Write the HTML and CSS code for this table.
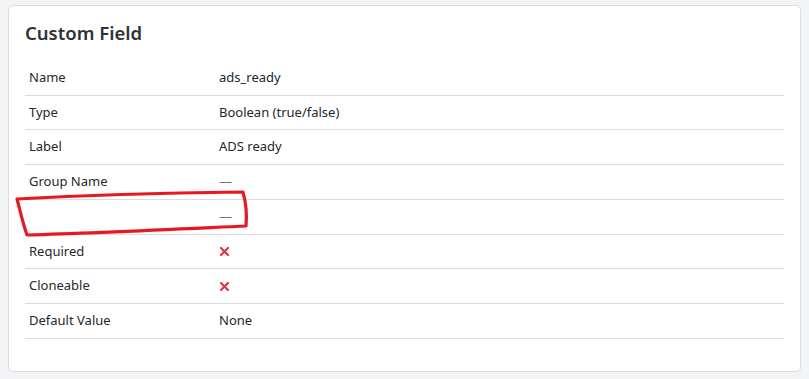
FILE: index.html
```html
<!DOCTYPE html>
<html lang="en">
<head>
  <meta charset="UTF-8">
  <meta name="viewport" content="width=device-width, initial-scale=1.0">
  <title>Custom Field</title>
  <link rel="stylesheet" href="styles.css">
</head>
<body>
  <div class="card">
    <h2 class="card-title">Custom Field</h2>
    <table class="details">
      <tr><td>Name</td><td>ads_ready</td></tr>
      <tr><td>Type</td><td>Boolean (true/false)</td></tr>
      <tr><td>Label</td><td>ADS ready</td></tr>
      <tr><td>Group Name</td><td><span class="muted">&mdash;</span></td></tr>
      <tr><td></td><td><span class="muted">&mdash;</span></td></tr>
      <tr>
        <td>Required</td>
        <td><svg class="no" width="9" height="9" viewBox="0 0 9 9"><path d="M1,1 L8,8 M8,1 L1,8"/></svg></td>
      </tr>
      <tr>
        <td>Cloneable</td>
        <td><svg class="no" width="9" height="9" viewBox="0 0 9 9"><path d="M1,1 L8,8 M8,1 L1,8"/></svg></td>
      </tr>
      <tr><td>Default Value</td><td>None</td></tr>
    </table>
  </div>

  <!-- marker scribble over the unnamed row -->
  <svg class="scribble" width="809" height="379" viewBox="0 0 809 379">
    <path d="M17,199 C70,196 160,193 243,192 C246,203 247,215 246,226 C180,229 100,233 27,235 C23,224 20,210 17,199"
          fill="none" stroke="#e5191f" stroke-width="3.2" stroke-linecap="round" stroke-linejoin="round"/>
  </svg>
</body>
</html>
```

FILE: styles.css
```css
body {
  margin: 0;
  padding: 5px 10px 0 8px;
  font-family: "Noto Sans", "Segoe UI", Arial, sans-serif;
  font-size: 13px;
  color: #23282d;
  background-color: #f3f4f6;
}

.card {
  width: 759px;
  padding: 14px 16px 32px;
  background-color: #fff;
  border: 1px solid #dcdcde;
  border-radius: 5px;
  box-shadow: 0 1px 1px rgba(0, 0, 0, 0.04);
}

.card-title {
  margin: 0 0 15px;
  font-size: 18.5px;
  font-weight: 600;
  line-height: 26px;
  color: #2c3338;
}

.details {
  width: 100%;
  border-collapse: collapse;
}

.details td {
  height: 17.7px;
  padding: 8px 4px;
  line-height: 17.7px;
  border-bottom: 1px solid #dcdcde;
  vertical-align: middle;
}

.details td:first-child {
  width: 182px;
}

.muted {
  color: #6c757d;
}

.no {
  display: block;
  margin-left: 1px;
  stroke: #dc3545;
  stroke-width: 2.2;
  stroke-linecap: square;
}

.scribble {
  position: absolute;
  top: 0;
  left: 0;
  pointer-events: none;
}
```
